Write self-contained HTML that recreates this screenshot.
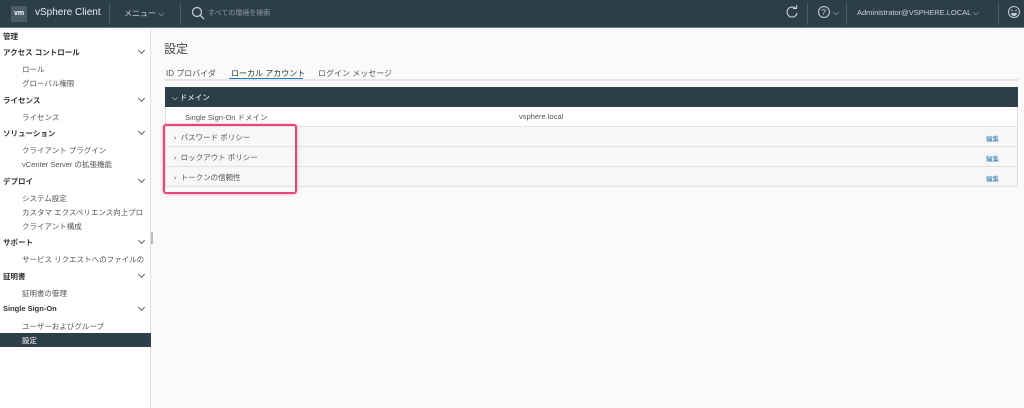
<!DOCTYPE html><html><head><meta charset="utf-8"><style>
*{margin:0;padding:0;box-sizing:border-box}
body{width:1024px;height:408px;overflow:hidden;background:#fafafa;font-family:"Liberation Sans","Noto Sans CJK JP",sans-serif;font-size:8px;color:#333;position:relative}
.hd{position:absolute;left:0;top:0;width:1024px;height:28px;background:#2d3e4b;border-bottom:1px solid #6c7d8a;color:#e8edf0}
.a{position:absolute;white-space:nowrap}
.sb{position:absolute;left:0;top:29px;width:151px;height:379px;background:#fff;border-right:1px solid #ddd}
.g{position:absolute;left:3px;font-weight:bold;color:#333;font-size:7.5px;white-space:nowrap}
.i{position:absolute;left:22px;color:#555;font-size:7.5px;white-space:nowrap;width:122px;overflow:hidden}
.cv{position:absolute;left:139px;width:5px;height:5px;border-right:1px solid #666;border-bottom:1px solid #666;transform:rotate(45deg);margin-top:1px}
.row{position:absolute;left:165px;width:853px;height:20px;border-bottom:1px solid #e2e2e2;background:#f7f7f7;border-left:1px solid #ddd;border-right:1px solid #ddd}
.row span{position:absolute;top:5px;font-size:7.5px;color:#555;white-space:nowrap}
.row span.ed{left:820px;color:#2a7ab0;font-size:6.5px;top:6px}
</style></head><body>
<div class="hd">
<div class="a" style="left:11px;top:6px;width:16px;height:16px;background:#4b5b67;color:#fff;font-size:7px;font-weight:bold;text-align:center;line-height:16px">vm</div>
<div class="a" style="left:35px;top:7px;font-size:10px">vSphere Client</div>
<div class="a" style="left:109px;top:3px;width:1px;height:22px;background:#4c5d6a"></div>
<div class="a" style="left:124px;top:8px;font-size:8px;color:#c8d0d6">メニュー ⌵</div>
<div class="a" style="left:180px;top:3px;width:1px;height:22px;background:#4c5d6a"></div>
<svg class="a" style="left:191px;top:6px" width="14" height="14"><circle cx="6" cy="6" r="4.5" fill="none" stroke="#c8d0d6" stroke-width="1.2"/><line x1="9.3" y1="9.3" x2="13" y2="13" stroke="#c8d0d6" stroke-width="1.3"/></svg>
<div class="a" style="left:208px;top:8px;font-size:7px;color:#8c9aa5">すべての環境を検索</div>
<svg class="a" style="left:785px;top:5px" width="14" height="14"><path d="M11 4A5 5 0 1 0 12 8" fill="none" stroke="#c8d0d6" stroke-width="1.1"/><path d="M8 3.5h3.5V0" fill="none" stroke="#c8d0d6" stroke-width="1.1"/></svg>
<div class="a" style="left:807px;top:3px;width:1px;height:22px;background:#4c5d6a"></div>
<svg class="a" style="left:817px;top:5px" width="14" height="14"><circle cx="7" cy="7" r="5.5" fill="none" stroke="#c8d0d6"/><text x="4.5" y="10" font-size="8" fill="#c8d0d6" font-family="Liberation Sans">?</text></svg>
<div class="a" style="left:833px;top:8px;color:#c8d0d6">⌵</div>
<div class="a" style="left:846px;top:3px;width:1px;height:22px;background:#4c5d6a"></div>
<div class="a" style="left:857px;top:8px;font-size:7.5px;color:#c8d0d6">Administrator@VSPHERE.LOCAL ⌵</div>
<div class="a" style="left:998px;top:3px;width:1px;height:22px;background:#4c5d6a"></div>
<svg class="a" style="left:1007px;top:5px" width="14" height="14"><circle cx="7" cy="7" r="5.5" fill="none" stroke="#c8d0d6"/><circle cx="5" cy="5.5" r=".8" fill="#c8d0d6"/><circle cx="9" cy="5.5" r=".8" fill="#c8d0d6"/><path d="M4 8h6a3 3 0 0 1-6 0" fill="#c8d0d6"/></svg>
</div>
<div class="sb">
<div class="g" style="top:2px">管理</div>
<div class="g" style="top:18px">アクセス コントロール</div><div class="cv" style="top:18px"></div>
<div class="i" style="top:35px">ロール</div>
<div class="i" style="top:49px">グローバル権限</div>
<div class="g" style="top:66px">ライセンス</div><div class="cv" style="top:66px"></div>
<div class="i" style="top:83px">ライセンス</div>
<div class="g" style="top:99px">ソリューション</div><div class="cv" style="top:99px"></div>
<div class="i" style="top:116px">クライアント プラグイン</div>
<div class="i" style="top:130px">vCenter Server の拡張機能</div>
<div class="g" style="top:147px">デプロイ</div><div class="cv" style="top:147px"></div>
<div class="i" style="top:164px">システム設定</div>
<div class="i" style="top:178px">カスタマ エクスペリエンス向上プロ...</div>
<div class="i" style="top:192px">クライアント構成</div>
<div class="g" style="top:208px">サポート</div><div class="cv" style="top:208px"></div>
<div class="i" style="top:225px">サービス リクエストへのファイルの...</div>
<div class="g" style="top:242px">証明書</div><div class="cv" style="top:242px"></div>
<div class="i" style="top:259px">証明書の管理</div>
<div class="g" style="top:275px">Single Sign-On</div><div class="cv" style="top:275px"></div>
<div class="i" style="top:292px">ユーザーおよびグループ</div>
<div class="a" style="left:0;top:304px;width:151px;height:14px;background:#2d3e4b"></div>
<div class="i" style="top:306px;color:#fff">設定</div>
</div>
<div class="a" style="left:151px;top:232px;width:2px;height:12px;background:#bbb"></div>
<div class="a" style="left:164px;top:40px;font-size:12px;color:#444">設定</div>
<div class="a" style="left:166px;top:68px;font-size:8px;color:#555">ID プロバイダ</div>
<div class="a" style="left:231px;top:68px;font-size:8px;color:#333">ローカル アカウント</div>
<div class="a" style="left:229px;top:78px;width:74px;height:2px;background:#1a7fc1"></div>
<div class="a" style="left:318px;top:68px;font-size:8px;color:#555">ログイン メッセージ</div>
<div class="a" style="left:164px;top:79px;width:855px;height:2px;background:#e5e5e5"></div>
<div class="a" style="left:165px;top:87px;width:853px;height:20px;background:#2d3e4b;color:#fff;font-size:7.5px;padding:5px 0 0 7px">⌵ ドメイン</div>
<div class="row" style="top:107px;background:#fff"><span style="left:19px">Single Sign-On ドメイン</span><span style="left:353px">vsphere.local</span></div>
<div class="row" style="top:127px"><span style="left:8px">›&nbsp; パスワード ポリシー</span><span class="ed">編集</span></div>
<div class="row" style="top:147px"><span style="left:8px">›&nbsp; ロックアウト ポリシー</span><span class="ed">編集</span></div>
<div class="row" style="top:167px"><span style="left:8px">›&nbsp; トークンの信頼性</span><span class="ed">編集</span></div>
<div class="a" style="left:163px;top:124px;width:134px;height:70px;border:2px solid #e8457a;border-radius:3px;box-shadow:0 0 3px rgba(232,69,122,.5)"></div>
</body></html>
